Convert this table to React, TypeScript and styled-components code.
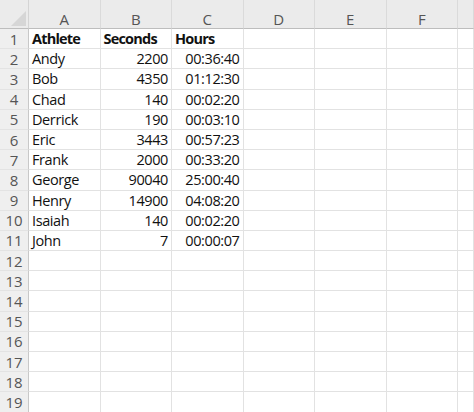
import styled, { createGlobalStyle } from "styled-components";

const GlobalStyle = createGlobalStyle`
  html, body {
    margin: 0;
    padding: 0;
    background: #ffffff;
  }
  body {
    font-family: "Open Sans", "Noto Sans", sans-serif;
    overflow: hidden;
  }
`;

const COLUMNS = ["A", "B", "C", "D", "E", "F", ""];
const ROW_COUNT = 19;

type Row = { name: string; seconds: number; hours: string };
type CellData = { t: string; b?: boolean; right?: boolean };

const data: Row[] = [
  { name: "Andy", seconds: 2200, hours: "00:36:40" },
  { name: "Bob", seconds: 4350, hours: "01:12:30" },
  { name: "Chad", seconds: 140, hours: "00:02:20" },
  { name: "Derrick", seconds: 190, hours: "00:03:10" },
  { name: "Eric", seconds: 3443, hours: "00:57:23" },
  { name: "Frank", seconds: 2000, hours: "00:33:20" },
  { name: "George", seconds: 90040, hours: "25:00:40" },
  { name: "Henry", seconds: 14900, hours: "04:08:20" },
  { name: "Isaiah", seconds: 140, hours: "00:02:20" },
  { name: "John", seconds: 7, hours: "00:00:07" },
];

function cellsFor(r: number): CellData[] {
  if (r === 1)
    return [
      { t: "Athlete", b: true },
      { t: "Seconds", b: true },
      { t: "Hours", b: true },
    ];
  const d = data[r - 2];
  if (!d) return [];
  return [
    { t: d.name },
    { t: String(d.seconds), right: true },
    { t: d.hours, right: true },
  ];
}

export default function App() {
  const rows = Array.from({ length: ROW_COUNT }, (_, i) => i + 1);

  return (
    <>
      <GlobalStyle />
      <Sheet>
        <Corner>
          <svg width="18" height="18" viewBox="0 0 18 18">
            <polygon points="17,2 17,17 2,17" fill="#d6d6d6" />
          </svg>
        </Corner>
        {COLUMNS.map((c, i) => (
          <ColHeader key={i}>{c}</ColHeader>
        ))}
        {rows.map((r) => {
          const cells = cellsFor(r);
          return [
            <RowHeader key={`h${r}`}>{r}</RowHeader>,
            ...COLUMNS.map((_, ci) => {
              const cell = cells[ci];
              return (
                <Cell key={`${r}-${ci}`} $bold={cell?.b} $right={cell?.right}>
                  {cell?.t}
                </Cell>
              );
            }),
          ];
        })}
      </Sheet>
    </>
  );
}

const Sheet = styled.div`
  display: grid;
  grid-template-columns: 29px repeat(6, 71.5px) 1fr;
  grid-template-rows: 29px repeat(${ROW_COUNT}, 20.2px);
  width: 474px;
  height: 412px;
  background: #ffffff;
`;

const Corner = styled.div`
  background: #ebebeb;
  border-right: 1px solid #d4d4d4;
  border-bottom: 1px solid #bdbdbd;
  display: flex;
  align-items: flex-end;
  justify-content: flex-end;
  padding: 0 1px 1px 0;
  box-sizing: border-box;
`;

const ColHeader = styled.div`
  background: #ebebeb;
  border-right: 1px solid #dadada;
  border-bottom: 1px solid #bdbdbd;
  box-sizing: border-box;
  display: flex;
  align-items: center;
  justify-content: center;
  padding-top: 10px;
  font-size: 15px;
  color: #555555;
`;

const RowHeader = styled.div`
  background: #efefef;
  border-right: 1px solid #c8c8c8;
  border-bottom: 1px solid #e3e3e3;
  box-sizing: border-box;
  display: flex;
  align-items: center;
  justify-content: center;
  font-size: 15px;
  color: #555555;
`;

const Cell = styled.div<{ $bold?: boolean; $right?: boolean }>`
  border-right: 1px solid #e2e2e2;
  border-bottom: 1px solid #e2e2e2;
  box-sizing: border-box;
  display: flex;
  align-items: center;
  justify-content: ${(p) => (p.$right ? "flex-end" : "flex-start")};
  padding: 0 3px;
  font-size: 14.5px;
  font-weight: ${(p) => (p.$bold ? 700 : 400)};
  letter-spacing: ${(p) => (p.$bold ? "-0.8px" : "-0.4px")};
  color: #111111;
  white-space: nowrap;
`;
